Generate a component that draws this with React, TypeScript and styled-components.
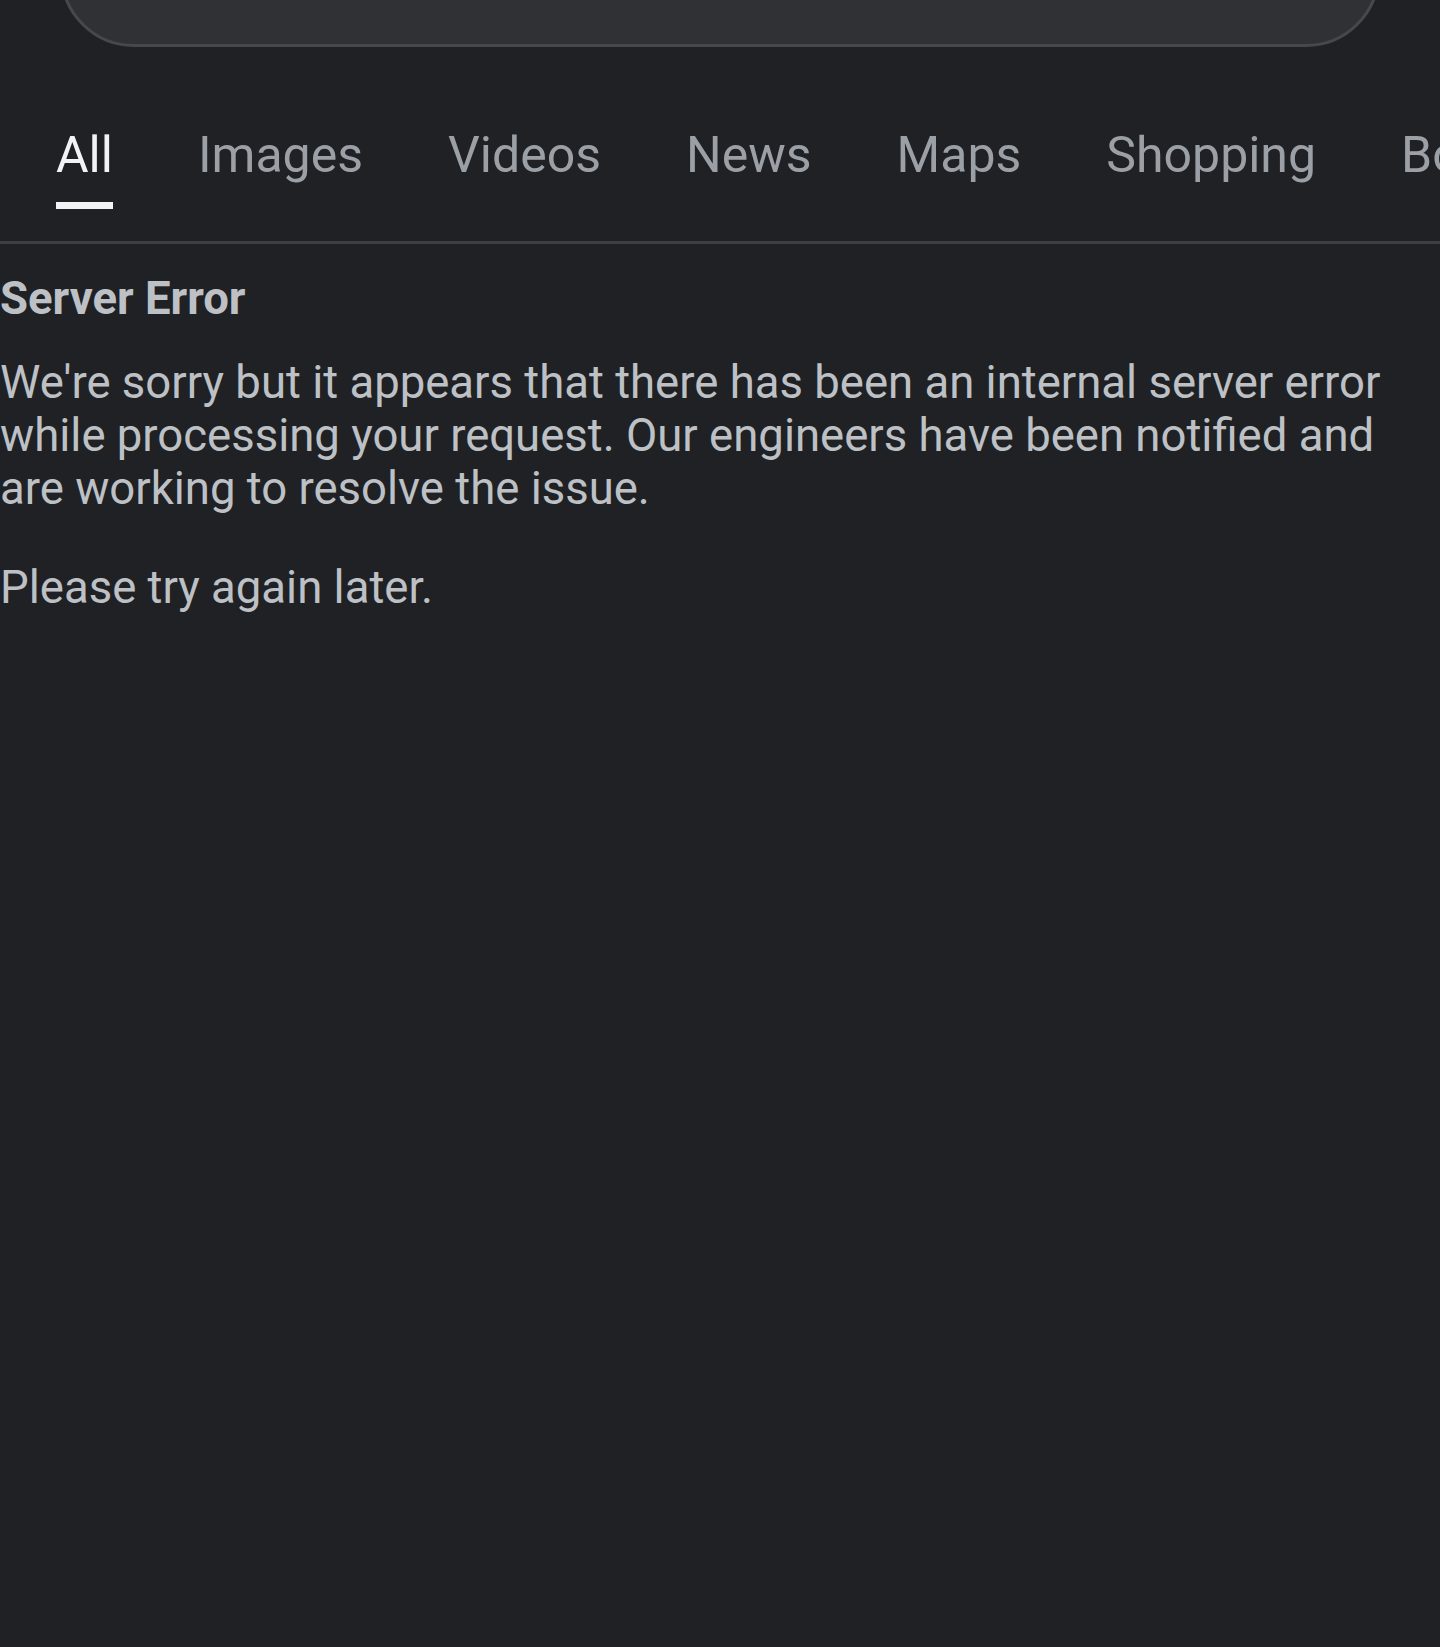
import React from "react";
import styled, { createGlobalStyle } from "styled-components";

const GlobalStyle = createGlobalStyle`
  html, body {
    margin: 0;
    padding: 0;
    background: #202124;
  }
  body {
    font-family: Roboto, "Liberation Sans", Arial, sans-serif;
    overflow-x: hidden;
  }
  #root {
    min-height: 1647px;
    background: #202124;
  }
`;

const Page = styled.div`
  width: 1440px;
  min-height: 1647px;
  background: #202124;
  overflow: hidden;
`;

const SearchBox = styled.div`
  box-sizing: border-box;
  height: 148px;
  margin: -101px 60px 0;
  border-radius: 74px;
  background: #303134;
  border: 3px solid #46484c;
`;

const TabBar = styled.nav`
  display: flex;
  gap: 85px;
  padding: 78px 0 0 56px;
  border-bottom: 3px solid #3c4043;
  white-space: nowrap;
  overflow: hidden;
`;

const Tab = styled.div<{ $active?: boolean }>`
  display: flex;
  flex-direction: column;
  align-items: stretch;
  padding-bottom: 32px;
  font-family: Roboto, "Open Sans", Arial, sans-serif;
  font-size: 50px;
  line-height: 60px;
  color: ${(p) => (p.$active ? "#f1f3f4" : "#9aa0a6")};
`;

const Indicator = styled.span<{ $active?: boolean }>`
  display: block;
  height: 7px;
  margin-top: 17px;
  background: ${(p) => (p.$active ? "#f1f3f4" : "transparent")};
`;

const Content = styled.main`
  padding-top: 28px;
  color: #bdc1c6;
  font-family: Roboto, "Liberation Sans", Arial, sans-serif;
`;

const Heading = styled.h1`
  margin: 0 0 30px;
  font-size: 45.5px;
  line-height: 54px;
  font-weight: 700;
`;

const Paragraph = styled.p`
  margin: 0 0 46px;
  font-size: 45.5px;
  line-height: 53px;
  font-weight: 400;
`;

const tabs = ["All", "Images", "Videos", "News", "Maps", "Shopping", "Books"];

export default function App() {
  return (
    <Page>
      <GlobalStyle />
      <SearchBox />
      <TabBar>
        {tabs.map((t, i) => (
          <Tab key={t} $active={i === 0}>
            {t}
            <Indicator $active={i === 0} />
          </Tab>
        ))}
      </TabBar>
      <Content>
        <Heading>Server Error</Heading>
        <Paragraph>
          We're sorry but it appears that there has been an internal server error
          while processing your request. Our engineers have been notified and are
          working to resolve the issue.
        </Paragraph>
        <Paragraph>Please try again later.</Paragraph>
      </Content>
    </Page>
  );
}
